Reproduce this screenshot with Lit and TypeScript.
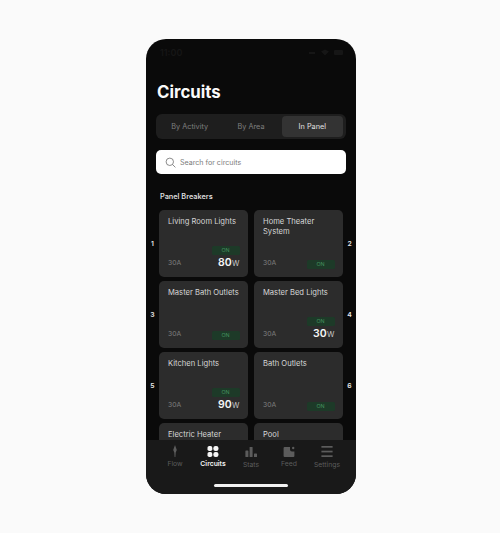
import { LitElement, html, css, svg } from "lit";
import { customElement } from "lit/decorators.js";

interface Breaker { n: number; name: string; watts?: number }

const left: Breaker[] = [
  { n: 1, name: "Living Room Lights", watts: 80 },
  { n: 3, name: "Master Bath Outlets" },
  { n: 5, name: "Kitchen Lights", watts: 90 },
  { n: 7, name: "Electric Heater" },
];
const right: Breaker[] = [
  { n: 2, name: "Home Theater System" },
  { n: 4, name: "Master Bed Lights", watts: 30 },
  { n: 6, name: "Bath Outlets" },
  { n: 8, name: "Pool" },
];

const icons = {
  flow: svg`<path d="M8 1 L9.8 6 L8.7 8.4 L8.4 13 H7.6 L7.3 8.4 L6.2 6 Z" fill="currentColor"/>`,
  circuits: svg`<rect x="2.5" y="2" width="4.8" height="5" rx="1.8" fill="currentColor"/><rect x="8.3" y="2" width="5.2" height="5" rx="2.2" fill="currentColor"/><rect x="2.5" y="8" width="4.8" height="5" rx="1.8" fill="currentColor"/><rect x="8.3" y="8" width="5.2" height="5" rx="2.2" fill="currentColor"/>`,
  stats: svg`<rect x="2.4" y="6.5" width="3" height="6.5" rx=".6" fill="currentColor"/><rect x="6.6" y="3" width="3" height="10" rx=".6" fill="currentColor"/><rect x="11" y="9.5" width="3" height="3.5" rx=".6" fill="currentColor"/>`,
  feed: svg`<path d="M2.6 4 a1 1 0 0 1 1-1 H9 V5.4 a2 2 0 0 0 2 2 h2.4 v4.6 a1 1 0 0 1-1 1 H3.6 a1 1 0 0 1-1-1 Z" fill="currentColor"/><circle cx="12.2" cy="4" r="1.2" fill="currentColor"/>`,
  settings: svg`<rect x="2.4" y="2" width="11.2" height="1.7" fill="currentColor"/><rect x="2.4" y="6.7" width="11.2" height="1.7" fill="currentColor"/><rect x="2.4" y="11.3" width="11.2" height="1.7" fill="currentColor"/>`,
};

const tabs = [
  { label: "Flow", icon: icons.flow, active: false, low: false },
  { label: "Circuits", icon: icons.circuits, active: true, low: false },
  { label: "Stats", icon: icons.stats, active: false, low: true },
  { label: "Feed", icon: icons.feed, active: false, low: false },
  { label: "Settings", icon: icons.settings, active: false, low: true },
];

@customElement("app-root")
export class AppRoot extends LitElement {
  static styles = css`
    :host {
      display: block;
      height: 533px;
      background: #fafafa;
      font-family: Inter, "Liberation Sans", sans-serif;
      box-sizing: border-box;
      padding: 39px 0 0 146px;
      overflow: hidden;
    }
    .phone {
      width: 210px;
      height: 455px;
      background: #0a0a0a;
      border-radius: 20px;
      overflow: hidden;
      display: flex;
      flex-direction: column;
    }
    .status {
      height: 26px;
      flex: none;
      display: flex;
      align-items: center;
      justify-content: space-between;
      padding: 0 13px 0 14px;
      color: #161616;
      font-size: 9px;
      font-weight: 600;
    }
    .status svg { display: block; }
    .scroll {
      flex: 1;
      min-height: 0;
      overflow: hidden;
    }
    h1 {
      margin: 16px 0 0 11px;
      font-size: 16.8px;
      line-height: 23px;
      font-weight: 700;
      color: #fafafa;
    }
    .seg {
      margin: 10px 10px 0;
      height: 25px;
      box-sizing: border-box;
      padding: 2px 3px;
      border-radius: 6px;
      background: #1e1e1e;
      display: grid;
      grid-template-columns: 1fr 1fr 1fr;
    }
    .seg span {
      display: flex;
      align-items: center;
      justify-content: center;
      font-size: 7.3px;
      color: #7e7e7e;
      border-radius: 4px;
    }
    .seg .on {
      background: #333333;
      color: #e2e2e2;
    }
    .search {
      margin: 11px 10px 0;
      height: 24px;
      border-radius: 5px;
      background: #ffffff;
      display: flex;
      align-items: center;
      gap: 4px;
      padding-left: 9px;
      font-size: 7.1px;
      color: #7a7a7a;
    }
    .section {
      margin: 18px 0 0 14px;
      font-size: 7.3px;
      line-height: 10px;
      font-weight: 600;
      color: #dddddd;
    }
    .grid {
      margin-top: 8px;
      display: grid;
      grid-template-columns: 13px 89px 95px 13px;
      row-gap: 4.5px;
      grid-auto-rows: 66.5px;
    }
    .num {
      display: flex;
      align-items: center;
      justify-content: center;
      font-size: 6.8px;
      font-weight: 600;
      color: #e8e8e8;
    }
    .card {
      background: #2c2c2c;
      border-radius: 5px;
      box-sizing: border-box;
      padding: 6.5px 8.5px 8px 9px;
      display: flex;
      flex-direction: column;
    }
    .card.r { margin-left: 6px; }
    .title {
      font-size: 7.6px;
      line-height: 10.5px;
      color: #d6d6d6;
    }
    .foot {
      margin-top: auto;
      display: flex;
      justify-content: space-between;
      align-items: flex-end;
    }
    .amp {
      font-size: 6.8px;
      line-height: 9px;
      color: #7f7f7f;
      margin-bottom: 1.5px;
    }
    .right {
      display: flex;
      flex-direction: column;
      align-items: flex-end;
      gap: 2px;
    }
    .badge {
      width: 28px;
      height: 9px;
      border-radius: 1.5px;
      background: #1d3a28;
      color: #44935f;
      font-size: 5.4px;
      display: flex;
      align-items: center;
      justify-content: center;
    }
    .watts {
      font-size: 10.5px;
      line-height: 11px;
      font-weight: 600;
      color: #f5f5f5;
    }
    .watts small {
      font-size: 7.5px;
      font-weight: 400;
      color: #c8c8c8;
      margin-left: .5px;
    }
    .tabbar {
      flex: none;
      height: 54px;
      background: #191919;
      display: flex;
      flex-direction: column;
      align-items: center;
    }
    .tabs {
      display: grid;
      grid-template-columns: repeat(5, 38px);
      padding-top: 4px;
    }
    .tab {
      display: flex;
      flex-direction: column;
      align-items: center;
      color: #5c5c5c;
      font-size: 6.8px;
      line-height: 8px;
    }
    .tab svg { display: block; }
    .tab.active { color: #f4f4f4; font-weight: 600; }
    .tab.low span { margin-top: 1px; }
    .home {
      margin-top: 15px;
      width: 74px;
      height: 2.5px;
      border-radius: 2px;
      background: #f2f2f2;
    }
  `;

  private card(b: Breaker, right: boolean) {
    return html`<div class="card ${right ? "r" : ""}">
      <div class="title">${b.name}</div>
      <div class="foot">
        <div class="amp">30A</div>
        <div class="right">
          <div class="badge">ON</div>
          ${b.watts
            ? html`<div class="watts">${b.watts}<small>W</small></div>`
            : ""}
        </div>
      </div>
    </div>`;
  }

  render() {
    return html`<div class="phone">
      <div class="status">
        <span>11:00</span>
        <svg width="34" height="7" viewBox="0 0 34 7" fill="#161616">
          <rect x="0" y="3" width="6" height="2"/>
          <path d="M12 2.5 L16 0.5 L20 2.5 L16 6.5 Z"/>
          <rect x="25" y="1" width="9" height="5" rx="1"/>
        </svg>
      </div>
      <div class="scroll">
        <h1>Circuits</h1>
        <div class="seg">
          <span>By Activity</span><span>By Area</span><span class="on">In Panel</span>
        </div>
        <div class="search">
          <svg width="11" height="11" viewBox="0 0 11 11" fill="none" stroke="#6f6f6f" stroke-width=".8">
            <circle cx="4.8" cy="4.8" r="3.7"/><path d="M7.5 7.5 L10.4 10.4"/>
          </svg>
          <span>Search for circuits</span>
        </div>
        <div class="section">Panel Breakers</div>
        <div class="grid">
          ${left.map(
            (b, i) => html`<div class="num">${b.n}</div>
              ${this.card(b, false)}
              ${this.card(right[i], true)}
              <div class="num">${right[i].n}</div>`
          )}
        </div>
      </div>
      <div class="tabbar">
        <div class="tabs">
          ${tabs.map(
            (t) => html`<div class="tab ${t.active ? "active" : ""} ${t.low ? "low" : ""}">
              <svg width="16" height="16" viewBox="0 0 16 16">${t.icon}</svg>
              <span>${t.label}</span>
            </div>`
          )}
        </div>
        <div class="home"></div>
      </div>
    </div>`;
  }
}
